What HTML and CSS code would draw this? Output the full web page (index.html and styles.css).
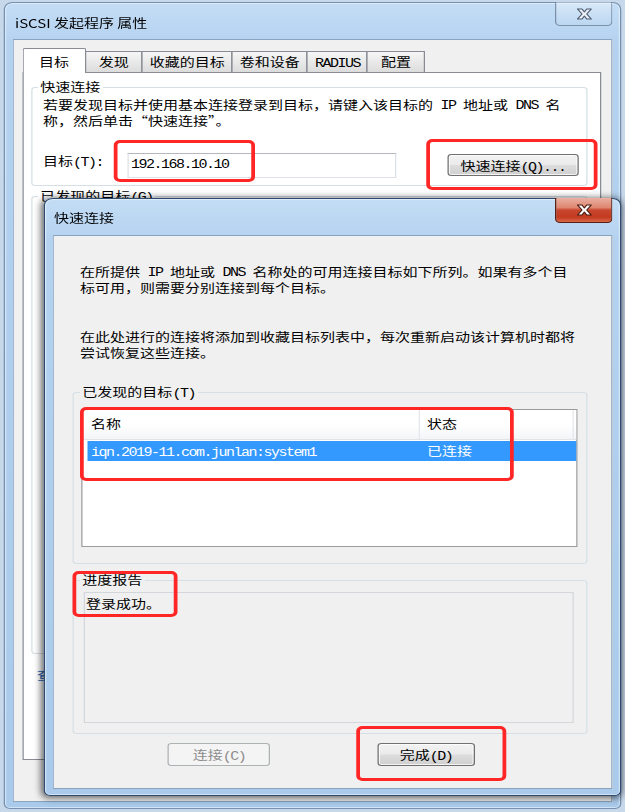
FILE: index.html
```html
<!DOCTYPE html>
<html lang="zh-CN">
<head>
  <meta charset="UTF-8">
  <meta name="viewport" content="width=device-width, initial-scale=1.0">
  <title>iSCSI 发起程序 属性</title>
  <link rel="stylesheet" href="styles.css">
</head>
<body>
  <div class="desktop">

    <!-- 属性窗口（后面，非活动） -->
    <div class="win outer">
      <div class="titlebar">
        <div class="title">iSCSI 发起程序 属性</div>
        <div class="close">
          <svg class="x" viewBox="0 0 13 12" width="13" height="12"><polygon points="1,1 4.6,1 6.5,3.9 8.4,1 12,1 8.4,6 12,11 8.4,11 6.5,8.1 4.6,11 1,11 4.6,6"/></svg>
        </div>
      </div>
      <div class="client">
        <div class="tabs">
          <div class="tab active">目标</div>
          <div class="tab">发现</div>
          <div class="tab">收藏的目标</div>
          <div class="tab">卷和设备</div>
          <div class="tab"><span class="en">RADIUS</span></div>
          <div class="tab">配置</div>
        </div>
        <div class="panel">
          <fieldset class="group quick">
            <legend>快速连接</legend>
            <p class="desc">若要发现目标并使用基本连接登录到目标，请键入该目标的<span class="en"> IP </span>地址或<span class="en"> DNS </span>名<br>称，然后单击“快速连接”。</p>
            <div class="target-row">
              <label>目标<span class="en">(T):</span></label>
              <div class="input"><span class="en">192.168.10.10</span></div>
              <button class="btn quick-btn">快速连接<span class="en">(Q)...</span></button>
            </div>
          </fieldset>
          <fieldset class="group found">
            <legend>已发现的目标<span class="en">(G)</span></legend>
          </fieldset>
          <a class="more" href="#">查看详细信息</a>
        </div>
      </div>
    </div>

    <!-- 快速连接 对话框（前面，活动） -->
    <div class="win dialog">
      <div class="titlebar">
        <div class="title">快速连接</div>
        <div class="close">
          <svg class="x" viewBox="0 0 13 12" width="13" height="12"><polygon points="1,1 4.6,1 6.5,3.9 8.4,1 12,1 8.4,6 12,11 8.4,11 6.5,8.1 4.6,11 1,11 4.6,6"/></svg>
        </div>
      </div>
      <div class="client dlg-client">
        <p class="dlg-text">在所提供<span class="en"> IP </span>地址或<span class="en"> DNS </span>名称处的可用连接目标如下所列。如果有多个目<br>标可用，则需要分别连接到每个目标。</p>
        <p class="dlg-text second">在此处进行的连接将添加到收藏目标列表中，每次重新启动该计算机时都将<br>尝试恢复这些连接。</p>

        <fieldset class="group dlg-group">
          <legend>已发现的目标<span class="en">(T)</span></legend>
          <div class="listview">
            <div class="lv-head">
              <div class="col-name">名称</div>
              <div class="col-state">状态</div>
            </div>
            <div class="lv-row">
              <div class="col-name"><span class="en">iqn.2019-11.com.junlan:system1</span></div>
              <div class="col-state">已连接</div>
            </div>
          </div>
        </fieldset>

        <fieldset class="group dlg-group progress">
          <legend>进度报告</legend>
          <div class="status">登录成功。</div>
        </fieldset>

        <div class="actions">
          <button class="btn btn-connect" disabled>连接<span class="en">(C)</span></button>
          <button class="btn btn-done">完成<span class="en">(D)</span></button>
        </div>
      </div>
    </div>

    <!-- 红色标注框 -->
    <div class="mark mark-ip"></div>
    <div class="mark mark-quick"></div>
    <div class="mark mark-list"></div>
    <div class="mark mark-progress"></div>
    <div class="mark mark-done"></div>
  </div>
</body>
</html>
```

FILE: styles.css
```css
* {
  box-sizing: border-box;
}
body {
  margin: 0;
  overflow: hidden;
  background: #c7d8ea;
  font-family: "Noto Sans CJK SC", "Liberation Sans", sans-serif;
  font-size: 12px;
  color: #000;
}
/* 截图本身横向拉伸了约 1.25 倍 */
.desktop {
  position: relative;
  width: 500px;
  height: 812px;
  transform: scaleX(1.25);
  transform-origin: 0 0;
}
/* 半角西文（宋体的等宽西文） */
.en {
  font-family: "Liberation Mono", monospace;
  font-size: 12px;
  line-height: 0;
  letter-spacing: -1.2px;
}
.desc .en,
.dlg-text .en {
  vertical-align: 1px;
}

/* 窗口框架 */
.win {
  position: absolute;
  display: flex;
  flex-direction: column;
  padding: 0 6px 6px;
  border: 1px solid #4d6a8f;
  border-radius: 7px 7px 5px 5px;
  background: linear-gradient(#c4ddf5, #b4d2f0 40px, #a9caeb);
  box-shadow: inset 0 0 0 1px rgba(255, 255, 255, 0.45);
}
.outer {
  left: 3px;
  top: 2px;
  width: 494px;
  height: 807px;
  border-color: #7690b0;
}
.dialog {
  left: 35px;
  top: 198px;
  width: 462px;
  height: 598px;
  border-color: #2f4a6d;
  box-shadow: inset 0 0 0 1px rgba(255, 255, 255, 0.45), -1px 1px 7px 1px rgba(0, 0, 0, 0.6);
}
.titlebar {
  display: flex;
  align-items: flex-start;
  flex-shrink: 0;
  height: 36px;
}
.title {
  margin: 11px 0 0 2px;
  line-height: 18px;
  font-size: 12px;
}
.dialog .title {
  margin: 10px 0 0 1.2px;
}
.close {
  display: flex;
  align-items: center;
  justify-content: center;
  width: 46px;
  height: 24px;
  margin: -1px 0 0 auto;
  border: 1px solid rgba(60, 80, 110, 0.55);
  border-top: 0;
  border-radius: 0 0 4px 4px;
  background: linear-gradient(rgba(255, 255, 255, 0.35), rgba(190, 214, 238, 0.3));
}
.dialog .close {
  height: 25px;
  border-color: #5a2013;
  background: linear-gradient(#eab0a2 0%, #de8670 40%, #c8472e 50%, #c33a20 80%, #d9694a 100%);
}
.x polygon {
  fill: #eef2f6;
  stroke: #4c5c72;
  stroke-width: 1;
  stroke-linejoin: round;
}
.dialog .x polygon {
  fill: #fff;
  stroke: #4a1c12;
}
.client {
  flex: 1;
  border: 1px solid #8aa3bf;
  background: #f0f0f0;
}
.outer .client {
  padding: 8px 8.2px 0 6.6px;
}

/* 选项卡 */
.tabs {
  display: flex;
  align-items: flex-end;
  height: 24px;
}
.tab {
  height: 21px;
  min-width: 46.6px;
  margin-left: -1px;
  padding: 0 5.5px;
  border: 1px solid #898c95;
  border-bottom: 0;
  line-height: 19px;
  text-align: center;
  white-space: nowrap;
  background: linear-gradient(#f6f6f6, #e9e9e9 50%, #dcdcdc);
}
.tab.active {
  position: relative;
  z-index: 1;
  width: 51.2px;
  height: 25px;
  margin: 0 0 -1px 0;
  padding-top: 3px;
  line-height: 20px;
  border-radius: 2px 2px 0 0;
  background: #fff;
}
.panel {
  height: 688px;
  padding: 7px 9.4px 0 6.2px;
  border: 1px solid #898c95;
  background: #fff;
}

/* 分组框 */
.group {
  min-width: 0;
  margin: 0;
  padding: 0;
  border: 1px solid #d5dfe5;
  border-radius: 3px;
}
.group legend {
  margin-left: 4.5px;
  padding: 0 2px;
  line-height: 14px;
  white-space: nowrap;
}
.quick .desc {
  margin: 3px 0 0 8.6px;
  line-height: 16px;
  white-space: nowrap;
}
.target-row {
  display: flex;
  align-items: flex-start;
  height: 25px;
  margin: 24px 6.2px 7px 8.6px;
}
.target-row label {
  width: 67.2px;
  margin-top: 1px;
  line-height: 14px;
}
.input {
  width: 215.2px;
  height: 25px;
  padding: 1px 0 0 2.2px;
  line-height: 16px;
  border: 1px solid #dde1e7;
  border-top-color: #b5b8be;
  background: #fff;
}
.btn {
  height: 22px;
  padding: 0;
  border: 1px solid #707070;
  border-radius: 3px;
  font: inherit;
  line-height: 19px;
  color: #000;
  background: linear-gradient(#f2f2f2, #ebebeb 48%, #dddddd 52%, #cfcfcf);
  box-shadow: inset 0 0 0 1px rgba(255, 255, 255, 0.75);
}
.btn:disabled {
  color: #8d8d8d;
  border-color: #adb2b5;
  background: #f4f4f4;
  box-shadow: none;
}
.quick-btn {
  width: 105.6px;
  margin: 1px 0 0 auto;
}
.found {
  height: 465px;
  margin-top: 3px;
}
.more {
  display: block;
  margin: 14px 0 0 4.8px;
  line-height: 14px;
  color: #1a5fb4;
  text-decoration: none;
  white-space: nowrap;
}

/* 对话框内容 */
.dlg-client {
  padding-top: 28px;
}
.dlg-text {
  margin: 0 0 0 21px;
  line-height: 16px;
  white-space: nowrap;
}
.dlg-text.second {
  margin-top: 33px;
}
.dlg-group {
  width: 412px;
  margin: 24px 0 0 15.4px;
}
.listview {
  width: 397.6px;
  height: 138px;
  margin: 10px 0 16px 5.4px;
  border: 1px solid #9b9b9b;
  background: #fff;
}
.lv-head {
  display: flex;
  height: 30px;
  border-bottom: 1px solid #e2e4e7;
  background: linear-gradient(#fff 50%, #f4f5f7);
}
.lv-head div {
  padding-top: 1px;
  line-height: 26px;
  border-right: 1px solid #e3e6ea;
}
.lv-head .col-name {
  width: 270.2px;
  padding-left: 7px;
}
.lv-head .col-state {
  width: 123.2px;
  padding-left: 5.6px;
}
.lv-row {
  display: flex;
  height: 20px;
  margin: 1px 0 0 4.6px;
  line-height: 20px;
  color: #fff;
  background: #3399ff;
}
.lv-row .col-name {
  width: 265.6px;
  padding-left: 2.4px;
}
.lv-row .col-state {
  padding-left: 5.6px;
}
.progress {
  margin-top: 9px;
}
.status {
  width: 392px;
  height: 131px;
  margin: 5px 0 10px 7.8px;
  padding: 2.5px 0 0 0.6px;
  line-height: 15px;
  border: 1px solid #d3d6da;
}
.actions {
  display: flex;
  margin-top: 9px;
  padding-left: 91.4px;
}
.btn-connect {
  width: 81.6px;
  height: 23px;
}
.btn-done {
  width: 78.4px;
  height: 23px;
  margin-left: 85.6px;
}

/* 红色标注框 */
.mark {
  position: absolute;
  z-index: 5;
  border: 3.5px solid #ff2626;
  border-radius: 5px;
}
.mark-ip {
  left: 91.2px;
  top: 140px;
  width: 112.8px;
  height: 42px;
}
.mark-quick {
  left: 340.8px;
  top: 139px;
  width: 136.8px;
  height: 51px;
}
.mark-list {
  left: 64px;
  top: 407px;
  width: 347.2px;
  height: 74px;
}
.mark-progress {
  left: 58.4px;
  top: 571px;
  width: 84px;
  height: 46px;
}
.mark-done {
  left: 284.8px;
  top: 726px;
  width: 120px;
  height: 55px;
}
```
